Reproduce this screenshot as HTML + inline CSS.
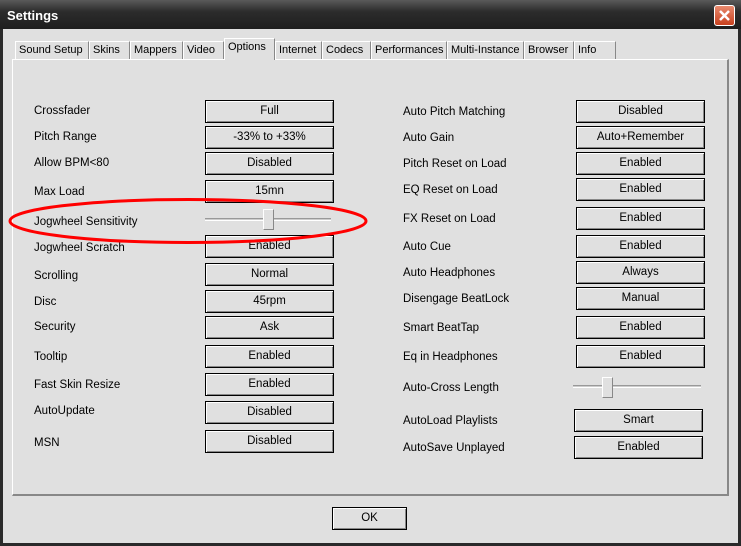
<!DOCTYPE html>
<html><head><style>
*{margin:0;padding:0;box-sizing:border-box}
body{width:741px;height:546px;overflow:hidden;background:#e0e0e0;font-family:"Liberation Sans",sans-serif;font-size:11.5px;color:#000;position:relative}
.win{position:absolute;left:0;top:0;width:741px;height:546px;border:3px solid #2a2a2a;border-top:none;background:#e0e0e0}
.title{position:absolute;left:0;top:0;width:741px;height:29px;background:linear-gradient(#5a5a5a,#2c2c2c 40%,#1e1e1e);color:#fff;font-weight:bold;font-size:13px;padding:8px 0 0 7px}
.close{position:absolute;left:714px;top:5px;width:21px;height:21px;border:1px solid #fff;border-radius:3px;background:linear-gradient(#e88a6e,#c8401e)}
.tab{position:absolute;top:41px;height:19px;border:1px solid #fff;border-right:1px solid #888;border-bottom:none;padding:2px 0 0 3px;background:#e0e0e0;white-space:nowrap;font-size:11px;overflow:hidden}
.panel{position:absolute;left:12px;top:59px;width:717px;height:437px;border-left:1px solid #fff;border-top:1px solid #fff;border-right:2px solid #888;border-bottom:2px solid #888}
.l{position:absolute;white-space:nowrap;line-height:14px;margin-top:1px}
.b{position:absolute;width:129px;height:23px;border:1px solid #000;box-shadow:inset 1px 1px 0 #fff,inset -1px -1px 0 #888;text-align:center;line-height:21px;background:#e0e0e0}
.sl{position:absolute;height:3px;border-top:1px solid #999;border-bottom:1px solid #fff;background:#ccc}
.th{position:absolute;width:11px;height:21px;background:#e0e0e0;border:1px solid #fff;border-right-color:#888;border-bottom-color:#888}
</style></head><body>
<div class="win"></div>
<div class="title">Settings<div class="close"><svg width="19" height="19" viewBox="0 0 19 19"><path d="M5 5L14 14M14 5L5 14" stroke="#fff" stroke-width="2.5"/></svg></div></div>
<div class="tab" style="left:15px;width:74px">Sound Setup</div>
<div class="tab" style="left:89px;width:41px">Skins</div>
<div class="tab" style="left:130px;width:53px">Mappers</div>
<div class="tab" style="left:183px;width:41px">Video</div>
<div class="tab" style="left:224px;width:51px;top:38px;height:22px;z-index:2">Options</div>
<div class="tab" style="left:275px;width:47px">Internet</div>
<div class="tab" style="left:322px;width:49px">Codecs</div>
<div class="tab" style="left:371px;width:76px">Performances</div>
<div class="tab" style="left:447px;width:77px">Multi-Instance</div>
<div class="tab" style="left:524px;width:50px">Browser</div>
<div class="tab" style="left:574px;width:42px">Info</div>
<div class="panel"></div>

<div class="l" style="left:34px;top:103px">Crossfader</div><div class="b" style="left:205px;top:100px">Full</div>
<div class="l" style="left:34px;top:129px">Pitch Range</div><div class="b" style="left:205px;top:126px">-33% to +33%</div>
<div class="l" style="left:34px;top:155px">Allow BPM&lt;80</div><div class="b" style="left:205px;top:152px">Disabled</div>
<div class="l" style="left:34px;top:184px">Max Load</div><div class="b" style="left:205px;top:180px">15mn</div>
<div class="l" style="left:34px;top:214px">Jogwheel Sensitivity</div><div class="sl" style="left:205px;top:218px;width:126px"></div><div class="th" style="left:263px;top:209px"></div>
<div class="l" style="left:34px;top:240px">Jogwheel Scratch</div><div class="b" style="left:205px;top:235px">Enabled</div>
<div class="l" style="left:34px;top:268px">Scrolling</div><div class="b" style="left:205px;top:263px">Normal</div>
<div class="l" style="left:34px;top:294px">Disc</div><div class="b" style="left:205px;top:290px">45rpm</div>
<div class="l" style="left:34px;top:319px">Security</div><div class="b" style="left:205px;top:316px">Ask</div>
<div class="l" style="left:34px;top:349px">Tooltip</div><div class="b" style="left:205px;top:345px">Enabled</div>
<div class="l" style="left:34px;top:377px">Fast Skin Resize</div><div class="b" style="left:205px;top:373px">Enabled</div>
<div class="l" style="left:34px;top:403px">AutoUpdate</div><div class="b" style="left:205px;top:401px">Disabled</div>
<div class="l" style="left:34px;top:435px">MSN</div><div class="b" style="left:205px;top:430px">Disabled</div>

<div class="l" style="left:403px;top:104px">Auto Pitch Matching</div><div class="b" style="left:576px;top:100px">Disabled</div>
<div class="l" style="left:403px;top:130px">Auto Gain</div><div class="b" style="left:576px;top:126px">Auto+Remember</div>
<div class="l" style="left:403px;top:156px">Pitch Reset on Load</div><div class="b" style="left:576px;top:152px">Enabled</div>
<div class="l" style="left:403px;top:182px">EQ Reset on Load</div><div class="b" style="left:576px;top:178px">Enabled</div>
<div class="l" style="left:403px;top:211px">FX Reset on Load</div><div class="b" style="left:576px;top:207px">Enabled</div>
<div class="l" style="left:403px;top:239px">Auto Cue</div><div class="b" style="left:576px;top:235px">Enabled</div>
<div class="l" style="left:403px;top:265px">Auto Headphones</div><div class="b" style="left:576px;top:261px">Always</div>
<div class="l" style="left:403px;top:291px">Disengage BeatLock</div><div class="b" style="left:576px;top:287px">Manual</div>
<div class="l" style="left:403px;top:320px">Smart BeatTap</div><div class="b" style="left:576px;top:316px">Enabled</div>
<div class="l" style="left:403px;top:349px">Eq in Headphones</div><div class="b" style="left:576px;top:345px">Enabled</div>
<div class="l" style="left:403px;top:380px">Auto-Cross Length</div><div class="sl" style="left:573px;top:385px;width:128px"></div><div class="th" style="left:602px;top:377px"></div>
<div class="l" style="left:403px;top:413px">AutoLoad Playlists</div><div class="b" style="left:574px;top:409px">Smart</div>
<div class="l" style="left:403px;top:440px">AutoSave Unplayed</div><div class="b" style="left:574px;top:436px">Enabled</div>

<div class="b" style="left:332px;top:507px;width:75px;height:23px">OK</div>

<svg style="position:absolute;left:0;top:0" width="741" height="546"><ellipse cx="188" cy="221" rx="178" ry="21.5" fill="none" stroke="#f00" stroke-width="3"/></svg>
</body></html>
